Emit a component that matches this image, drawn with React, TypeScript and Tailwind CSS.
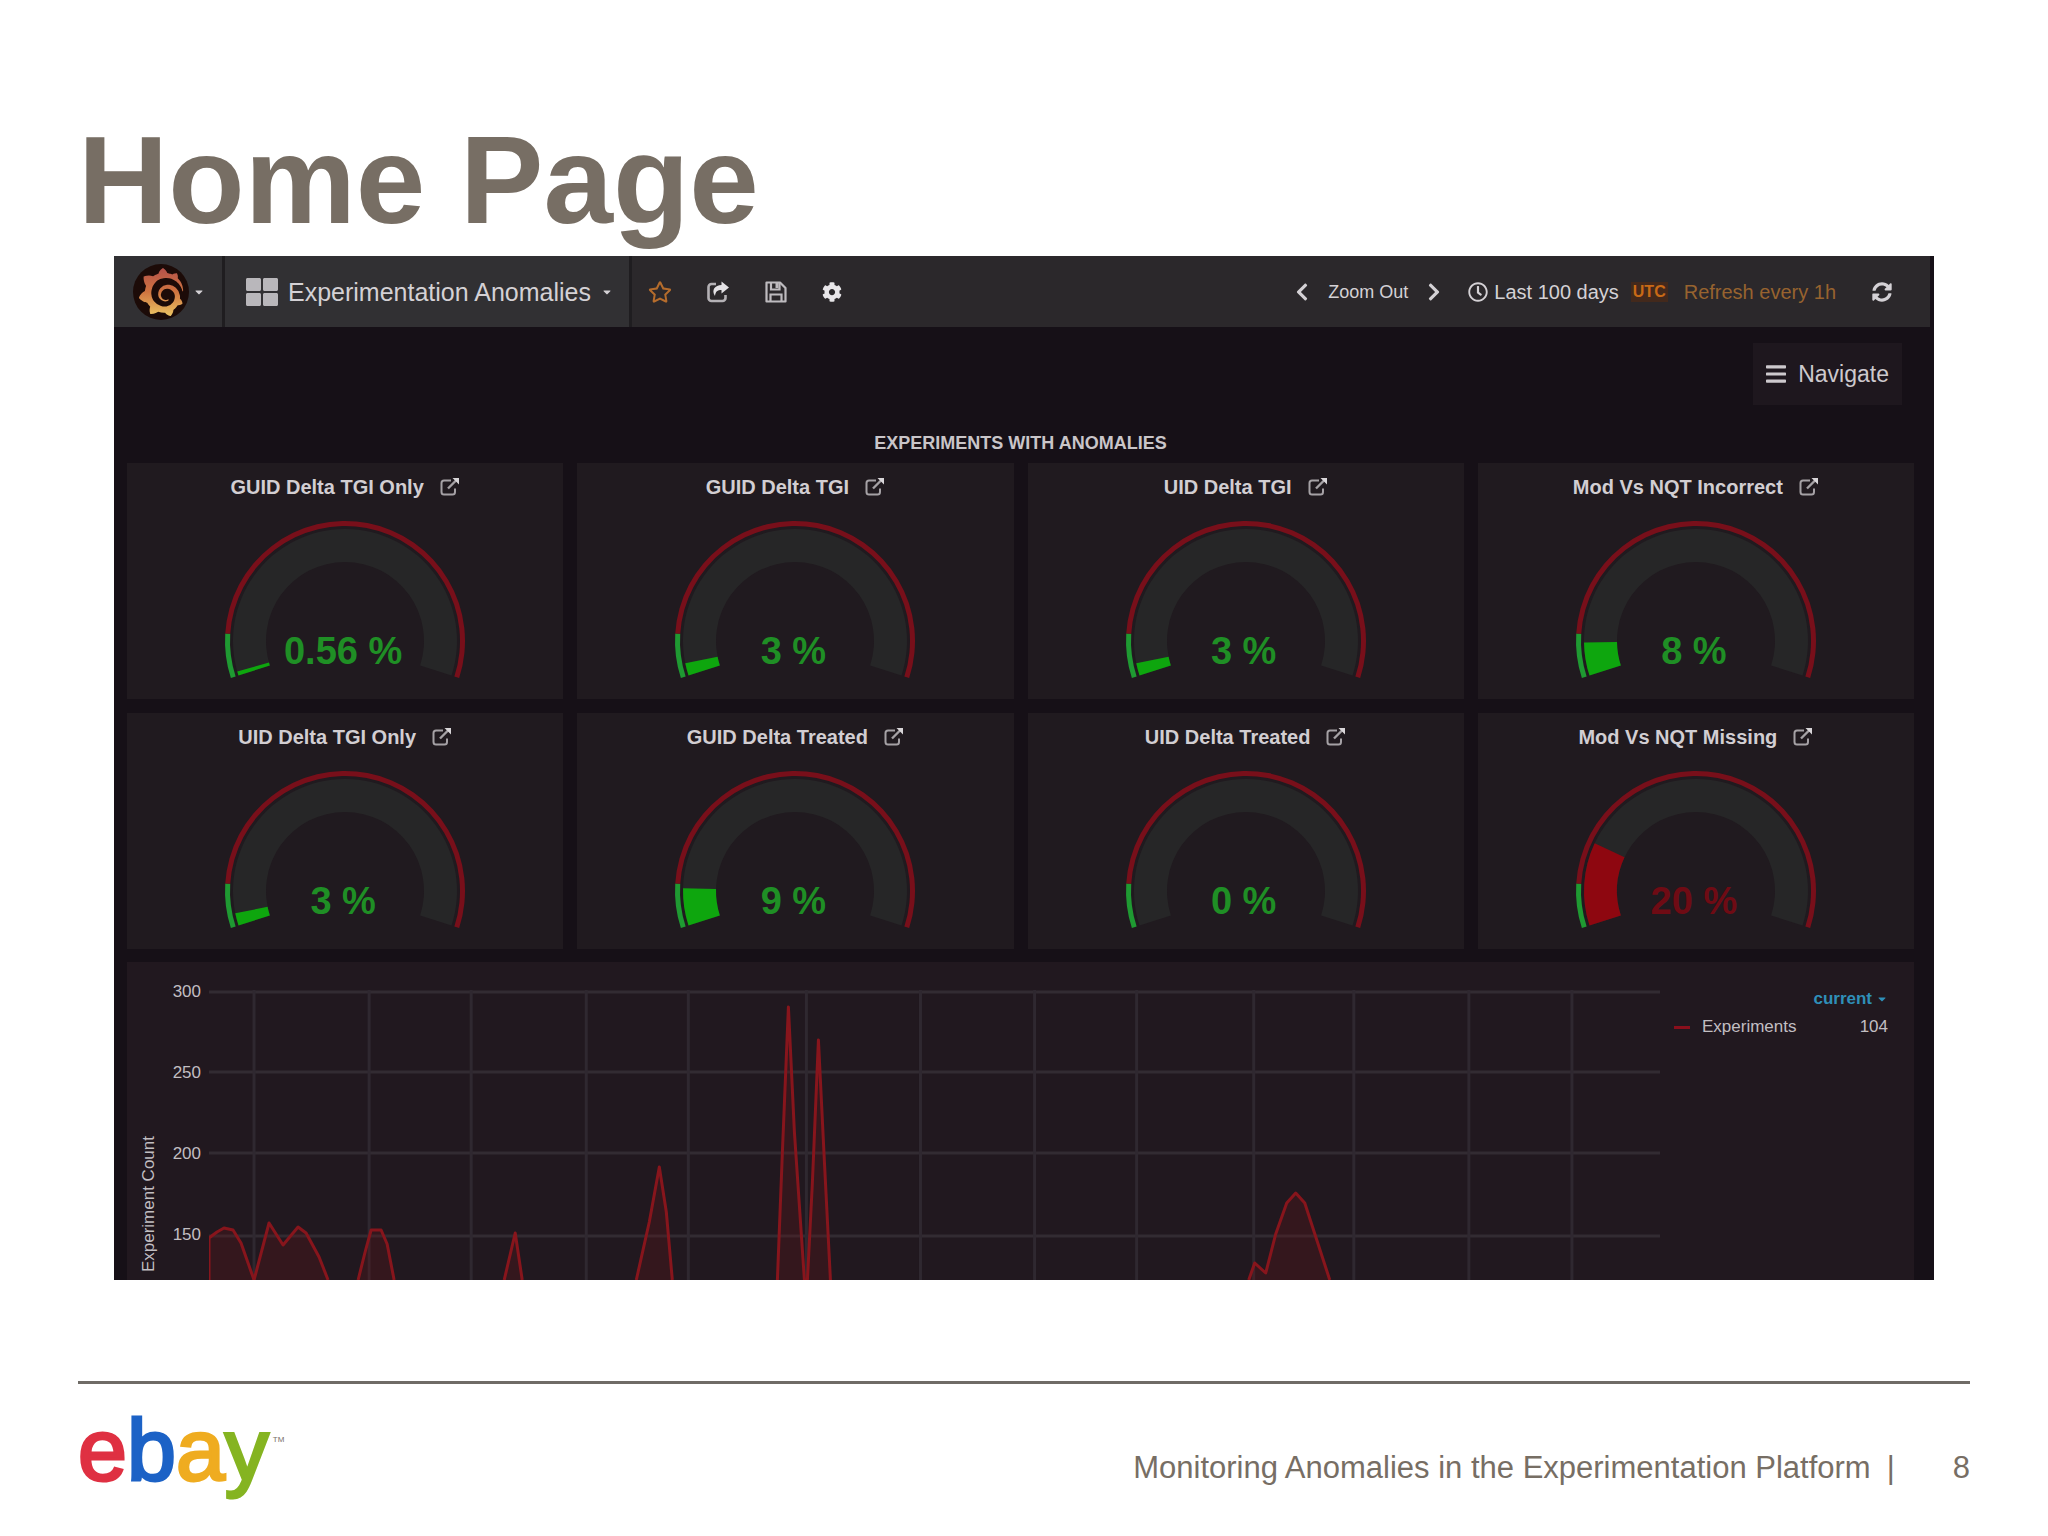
import {
  FaBars,
  FaCaretDown,
  FaChevronLeft,
  FaChevronRight,
  FaCog,
  FaRegClock,
  FaRegStar,
  FaSyncAlt,
  FaThLarge,
} from 'react-icons/fa';
import { SiGrafana } from 'react-icons/si';

interface Stat {
  title: string;
  value: number;
}

const STATS: Stat[] = [
  { title: 'GUID Delta TGI Only', value: 0.56 },
  { title: 'GUID Delta TGI', value: 3 },
  { title: 'UID Delta TGI', value: 3 },
  { title: 'Mod Vs NQT Incorrect', value: 8 },
  { title: 'UID Delta TGI Only', value: 3 },
  { title: 'GUID Delta Treated', value: 9 },
  { title: 'UID Delta Treated', value: 0 },
  { title: 'Mod Vs NQT Missing', value: 20 },
];

const THRESHOLD = 10;

// The gauge sweeps 216 degrees, starting 18 degrees below the left horizontal
const CX = 125;
const CY = 126;

function point(pct: number, r: number) {
  const angle = ((162 + pct * 2.16) * Math.PI) / 180;
  return `${(CX + r * Math.cos(angle)).toFixed(2)} ${(CY + r * Math.sin(angle)).toFixed(2)}`;
}

function ring(from: number, to: number, inner: number, outer: number) {
  const large = (to - from) * 2.16 > 180 ? 1 : 0;
  return [
    `M${point(from, outer)}`,
    `A${outer} ${outer} 0 ${large} 1 ${point(to, outer)}`,
    `L${point(to, inner)}`,
    `A${inner} ${inner} 0 ${large} 0 ${point(from, inner)}Z`,
  ].join('');
}

function ExternalLinkIcon() {
  return (
    <svg viewBox="0 0 20 20" className="h-5 w-5" fill="none" stroke="#a5a1a5" strokeWidth="2">
      <path d="M11 3.5H4a2.5 2.5 0 0 0-2.5 2.5v9A2.5 2.5 0 0 0 4 17.5h8.5A2.5 2.5 0 0 0 15 15v-3.5" />
      <path d="M8 11.5 16 3.5" strokeWidth="2.4" />
      <path d="M12.5 1H19v6.5Z" fill="#d8d5d8" stroke="none" />
    </svg>
  );
}

function ShareIcon() {
  return (
    <svg viewBox="0 0 24 24" className="h-6 w-6" fill="none">
      <path
        d="M10 4H5.5A3 3 0 0 0 2.5 7v11a3 3 0 0 0 3 3h11a3 3 0 0 0 3-3v-3"
        stroke="#b4b1b5"
        strokeWidth="2.6"
      />
      <path d="M15.5 1.5 23 7.5l-7.500 6V10c-4 0-6 1.500-6.500 6-4-6 0-11 6.500-11Z" fill="#e4e2e5" />
    </svg>
  );
}

function SaveIcon() {
  return (
    <svg viewBox="0 0 24 24" className="h-6 w-6" fill="none" stroke="#bebbbf" strokeWidth="2.2">
      <path d="M2.5 2.5H16l5.5 5.5v13.5h-19Z" strokeLinejoin="round" />
      <path d="M7 3v6.500h8.500V3M6.500 21v-6.500h11V21" />
      <path d="M11.500 3h3v5h-3Z" fill="#bebbbf" stroke="none" />
    </svg>
  );
}

function Gauge({ title, value }: Stat) {
  const over = value >= THRESHOLD;
  return (
    <section className="relative flex h-[236px] flex-col items-center bg-[#201a1f] pt-3">
      <h3 className="flex items-center gap-4 text-xl leading-6 font-bold text-[#d2ced2]">
        {title}
        <a href="#" aria-label={`Open ${title}`}>
          <ExternalLinkIcon />
        </a>
      </h3>
      <svg viewBox="0 0 250 170" className="mt-4 h-[170px] w-[250px]" aria-hidden="true">
        <path d={ring(0, 100, 79, 112)} fill="#262627" />
        <path d={ring(0, THRESHOLD, 115, 120)} fill="#1f9a32" />
        <path d={ring(THRESHOLD, 100, 115, 120)} fill="#780f1a" />
        {value > 0 && <path d={ring(0, Math.max(value, 1), 79, 112)} fill={over ? '#8e0710' : '#0ea60e'} />}
      </svg>
      <p
        className={`absolute inset-x-0 top-[168px] pr-1 text-center text-[38px] leading-10 font-bold ${
          over ? 'text-[#6f0b14]' : 'text-[#1f8f25]'
        }`}
      >
        {value} %
      </p>
    </section>
  );
}

const GRID_X = [45, 160, 262, 377, 479, 597, 711, 825, 927, 1044, 1144, 1259, 1362];
const GRID_Y = [30, 110, 191, 274];

const SERIES = [
  '0,318 0,276 8,270 15,266 24,268 32,281 45,318 60,261 74,283 89,265 97,271 110,295 119,318',
  '149,318 156,290 162,268 172,268 178,282 185,318',
  '295,318 306,271 313,318',
  '427,318 440,260 450,205 457,250 463,318',
  '568,318 573,190 579,45 585,170 595,318 598,318 603,220 609,78 615,200 621,318',
  '1039,318 1045,301 1056,311 1066,272 1077,241 1086,231 1095,241 1108,281 1120,318',
];

function ExperimentChart() {
  return (
    <section className="flex h-[318px] overflow-hidden bg-[#21181f] text-[17px] leading-5 text-[#c2bec2]">
      <div className="flex w-8 items-end justify-end pb-2">
        <span className="rotate-180 whitespace-nowrap [writing-mode:vertical-rl]">Experiment Count</span>
      </div>
      <div className="flex w-[42px] flex-col items-end gap-[61px] pt-5">
        <span>300</span>
        <span>250</span>
        <span>200</span>
        <span>150</span>
      </div>
      <svg viewBox="0 0 1450 318" preserveAspectRatio="none" className="ml-2 h-full min-w-0 flex-1">
        {GRID_Y.map((y) => (
          <path key={y} d={`M0 ${y}H1450`} stroke="#322b32" strokeWidth="3" />
        ))}
        {GRID_X.map((x) => (
          <path key={x} d={`M${x} 28V318`} stroke="#2f2830" strokeWidth="3" />
        ))}
        {SERIES.map((points) => (
          <polyline
            key={points}
            points={points}
            fill="#6e1418"
            fillOpacity="0.25"
            stroke="#87151c"
            strokeWidth="3"
            strokeLinejoin="round"
          />
        ))}
      </svg>
      <div className="w-[254px] pt-[27px] pr-[26px] pl-[14px]">
        <table className="w-full">
          <thead>
            <tr>
              <th />
              <th className="pb-2 text-right">
                <button className="inline-flex items-center gap-1 font-bold text-[#2f8fb8]">
                  current
                  <FaCaretDown className="h-3 w-3" />
                </button>
              </th>
            </tr>
          </thead>
          <tbody>
            <tr>
              <td>
                <span className="mr-3 inline-block h-[3px] w-4 bg-[#8a0f1c] align-middle" />
                Experiments
              </td>
              <td className="text-right">104</td>
            </tr>
          </tbody>
        </table>
      </div>
    </section>
  );
}

function Toolbar() {
  return (
    <header className="flex h-[71px] items-stretch bg-[#2b282b] text-[#d4d1d5]">
      <button className="flex w-[111px] items-center gap-1 border-r-3 border-[#1f1d20] bg-[#313033] pl-[19px]" aria-label="Main menu">
        <span className="flex h-14 w-14 items-center justify-center rounded-full bg-[#1c0b08]">
          <svg className="absolute h-0 w-0" aria-hidden="true">
            <defs>
              <linearGradient id="flame" x1="0" y1="0" x2="0" y2="1">
                <stop offset="0" stopColor="#b5514a" />
                <stop offset="0.5" stopColor="#cf7440" />
                <stop offset="1" stopColor="#ecc463" />
              </linearGradient>
            </defs>
          </svg>
          <SiGrafana className="h-12 w-12" fill="url(#flame)" />
        </span>
        <FaCaretDown className="h-3 w-3" />
      </button>
      <button className="flex items-center gap-[10px] border-r-3 border-[#1f1d20] bg-[#313033] pr-4 pl-[21px] text-[25px] leading-8 whitespace-nowrap">
        <FaThLarge className="h-8 w-8 text-[#b9b7bb]" />
        Experimentation Anomalies
        <FaCaretDown className="h-3 w-3" />
      </button>
      <div className="flex items-center gap-[34px] pl-4">
        <button aria-label="Star" className="text-[#b56c2c]">
          <FaRegStar className="h-6 w-6" />
        </button>
        <button aria-label="Share">
          <ShareIcon />
        </button>
        <button aria-label="Save">
          <SaveIcon />
        </button>
        <button aria-label="Settings" className="text-[#e8e6e9]">
          <FaCog className="h-5 w-5" />
        </button>
      </div>
      <div className="ml-auto flex items-center pr-[38px] text-xl leading-6 whitespace-nowrap">
        <button aria-label="Back">
          <FaChevronLeft className="h-5 w-5" />
        </button>
        <button className="mx-4 text-lg">Zoom Out</button>
        <button aria-label="Forward">
          <FaChevronRight className="h-5 w-5" />
        </button>
        <button className="ml-6 flex items-center gap-[6px]">
          <FaRegClock className="h-5 w-5" />
          Last 100 days
        </button>
        <span className="ml-3 bg-[#43291c] px-[2px] text-base leading-5 font-bold text-[#c96a16]">UTC</span>
        <span className="ml-4 text-[#97632f]">Refresh every 1h</span>
        <button aria-label="Refresh" className="ml-9">
          <FaSyncAlt className="h-5 w-5" />
        </button>
      </div>
    </header>
  );
}

function EbayLogo() {
  return (
    <div className="flex items-start" aria-label="ebay">
      <div className="text-[88px] leading-[88px] [-webkit-text-stroke-width:3px]">
        <span className="text-[#df3042]">e</span>
        <span className="text-[#1c62c6]">b</span>
        <span className="text-[#efac20]">a</span>
        <span className="text-[#85b421]">y</span>
      </div>
      <span className="pt-7 pl-1 text-[8px] leading-3 text-[#77706a]">TM</span>
    </div>
  );
}

export default function App() {
  return (
    <div className="flex min-h-screen flex-col bg-white px-[78px] font-['Liberation_Sans',Arial,sans-serif] text-[#776e64]">
      <h1 className="pt-[106px] pb-[2px] text-[125px] leading-[148px] font-bold">Home Page</h1>

      <main className="mx-9 bg-[#161017] pr-1">
        <Toolbar />
        <div className="flex flex-col pt-4 pr-4 pl-[13px]">
          <button className="mr-3 flex h-[62px] items-center gap-3 self-end bg-[#1e171e] px-[13px] text-[23px] leading-7 text-[#cdc9cd]">
            <FaBars className="h-6 w-5" />
            Navigate
          </button>
          <h2 className="mt-7 mb-[10px] text-center text-lg leading-5 font-bold text-[#c9c5c9]">
            EXPERIMENTS WITH ANOMALIES
          </h2>
          <div className="grid grid-cols-4 gap-[14px]">
            {STATS.map((stat) => (
              <Gauge key={stat.title} {...stat} />
            ))}
          </div>
          <div className="mt-[13px]">
            <ExperimentChart />
          </div>
        </div>
      </main>

      <footer className="mt-[101px] flex items-start border-t-[3px] border-[#6f6b66] pt-[22px]">
        <EbayLogo />
        <p className="mt-11 ml-auto text-[31px] leading-9">Monitoring Anomalies in the Experimentation Platform</p>
        <span className="mt-11 ml-4 text-[31px] leading-9">|</span>
        <span className="mt-11 ml-[58px] text-[31px] leading-9">8</span>
      </footer>
    </div>
  );
}
